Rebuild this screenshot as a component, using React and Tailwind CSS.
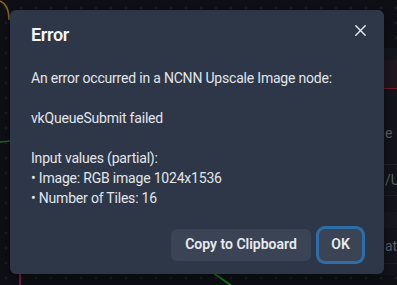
import React from "react";

export default function App() {
  return (
    <div
      className="relative w-[397px] h-[285px] overflow-hidden bg-[#0e1015] bg-[radial-gradient(circle,#2a2e37_0.9px,transparent_1.1px)] bg-[length:15px_15px] bg-[position:-1.5px_0.5px]"
      style={{ fontFamily: "Roboto, 'Noto Sans', sans-serif" }}
    >
      {/* canvas edges */}
      <svg className="absolute left-0 top-0" width="397" height="285">
        <path d="M0 1 C5 3 9 8 9 20" stroke="#8a6a16" strokeWidth="1.5" fill="none" />
        <path d="M0 142 L10 141" stroke="#1d6b22" strokeWidth="1.5" fill="none" />
        <path d="M20 272 L20 285" stroke="#8a2458" strokeWidth="1.6" fill="none" />
        <path d="M212 272 L232 286" stroke="#1c7a20" strokeWidth="2" fill="none" />
      </svg>

      {/* node at right edge */}
      <div className="absolute left-[372px] top-[48px] w-[40px] h-[227px] flex flex-col bg-[#13151b] text-[#5f6470] text-[14px] leading-none">
        <div className="h-[12px] bg-[#15171e]" />
        <div className="h-[29px] bg-[#221820] border-b border-[#7a1c2a]" />
        <div className="h-[31px]" />
        <div className="h-[26px] flex items-center pl-[13px]">e</div>
        <div className="h-[18px]" />
        <div className="h-[31px] flex items-center pl-[13px] border-t border-[#22252d]">/U</div>
        <div className="h-[17px] border-t border-[#1d2028]" />
        <div className="h-[16px] flex items-center pl-[30px] text-[11px] bg-[#181a21]">F</div>
        <div className="h-[35px] flex items-center pl-[13px]">at</div>
        <div className="flex-1 border-t border-[#1d2028]" />
      </div>

      {/* modal */}
      <div className="absolute left-[10px] top-[10px] w-[374px] h-[264px] rounded-[6px] bg-[#2d3748] shadow-[0_4px_16px_rgba(0,0,0,0.5)] flex flex-col pl-[21px] pr-[22px] pt-[11px]">
        <div className="text-[18px] font-semibold leading-7 tracking-[-0.3px] text-[#f2f4f7]">Error</div>
        <button className="absolute right-[8px] top-[4px] w-[32px] h-[32px] flex items-center justify-center text-[#e8ebf0]">
          <svg width="11" height="11" viewBox="0 0 11 11">
            <path d="M0.8 0.8 L10.2 10.2 M10.2 0.8 L0.8 10.2" stroke="currentColor" strokeWidth="1.4" strokeLinecap="round" />
          </svg>
        </button>
        <div className="mt-[18.5px] text-[14px] leading-5 tracking-[-0.2px] text-[#e2e6ec] whitespace-pre-wrap">
          {"An error occurred in a NCNN Upscale Image node:\n\nvkQueueSubmit failed\n\nInput values (partial):\n• Image: RGB image 1024x1536\n• Number of Tiles: 16"}
        </div>
        <div className="mt-[21px] flex justify-end gap-[8px]">
          <button className="h-[32px] w-[140px] rounded-[6px] bg-[#3b4455] text-[14px] font-semibold text-[#e8ebf0] flex items-center justify-center">
            Copy to Clipboard
          </button>
          <button className="h-[32px] w-[43px] rounded-[6px] bg-[#3b4455] text-[14px] font-semibold text-[#e8ebf0] flex items-center justify-center shadow-[0_0_0_3px_#2d6ea8]">
            OK
          </button>
        </div>
      </div>
    </div>
  );
}
